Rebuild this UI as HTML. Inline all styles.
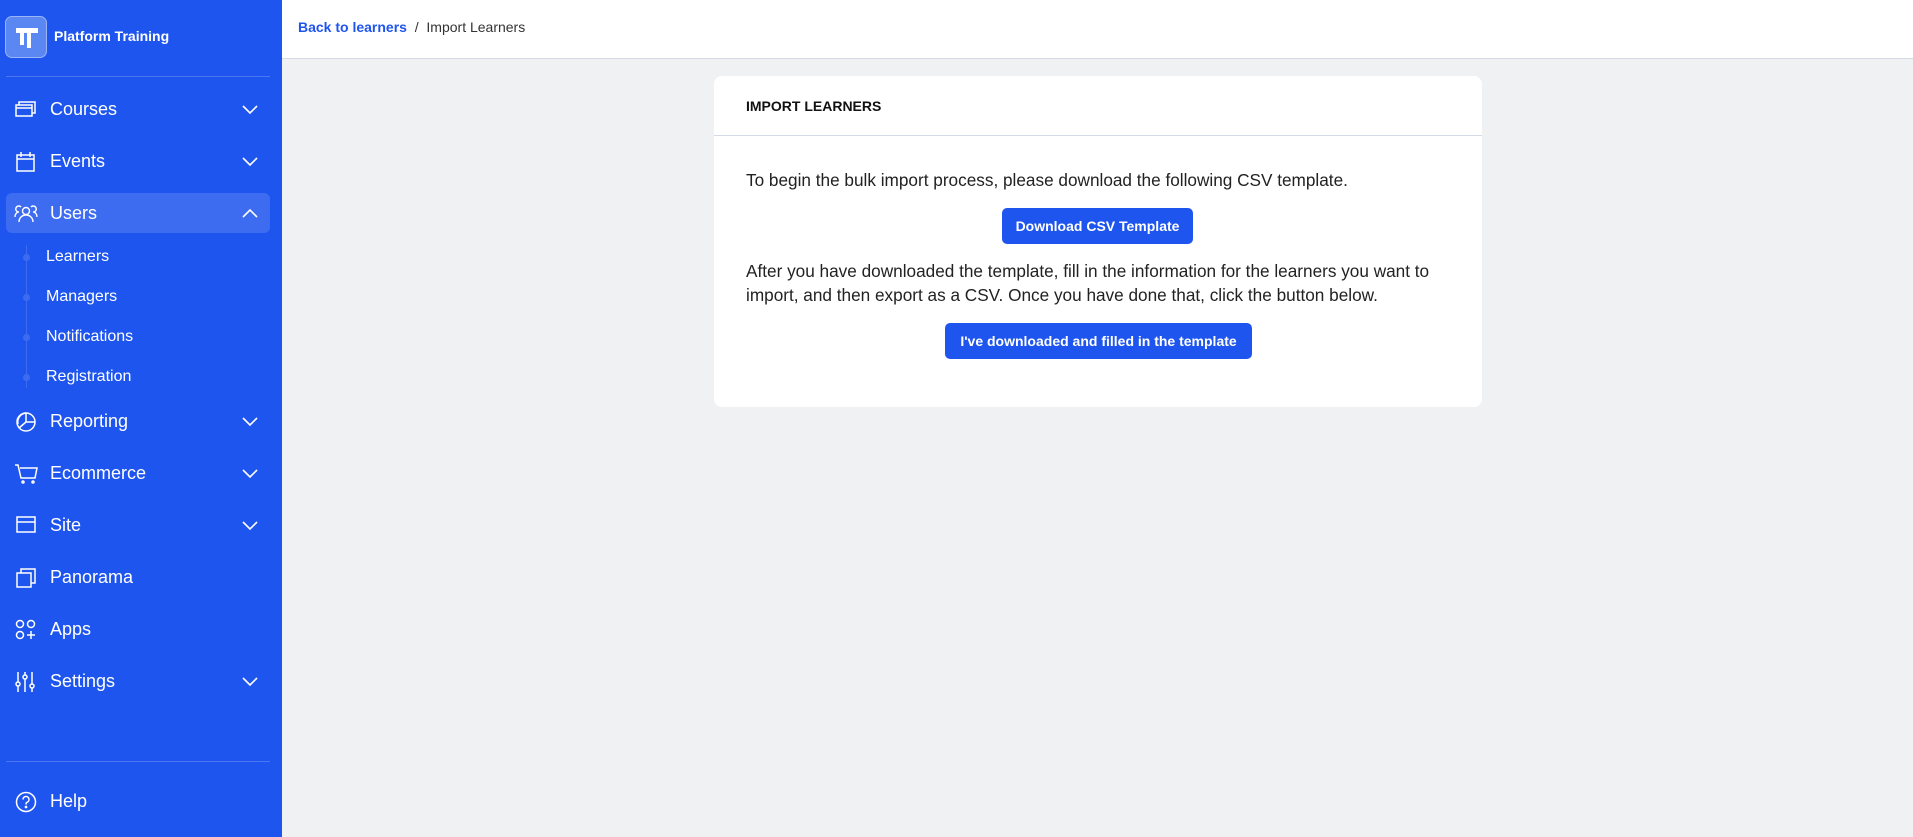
<!DOCTYPE html>
<html><head><style>
*{box-sizing:border-box;margin:0;padding:0}
body{width:1913px;height:837px;overflow:hidden;background:#f0f1f3;font-family:"Liberation Sans",sans-serif;position:relative}
.sb{position:absolute;left:0;top:0;width:282px;height:837px;background:#1f55ef;color:#fff}
.logo{position:absolute;left:5px;top:16px;width:42px;height:42px;border-radius:7px;background:#5b87f3;border:1px solid #9ab5f7}
.brand{position:absolute;left:54px;top:28px;font-size:14px;font-weight:bold}
.hr{position:absolute;left:6px;width:264px;height:1px;background:#4a76f2}
.it{position:absolute;left:0;width:282px;height:40px;font-size:18px}
.it svg.ic{position:absolute;left:15px;top:10px}
.it span{position:absolute;left:50px;top:10px}
.it svg.ch{position:absolute;left:241px;top:14px}
.act{left:6px!important;width:264px;background:#3d6cf1;border-radius:6px}
.sub{position:absolute;left:46px;font-size:16px}
.dot{position:absolute;left:23px;width:7px;height:7px;border-radius:50%;background:#3d6cf1}
.top{position:absolute;left:282px;top:0;right:0;height:59px;background:#fff;border-bottom:1px solid #d4dbe6;font-size:14px}
.card{position:absolute;left:714px;top:76px;width:768px;height:331px;background:#fff;border-radius:8px}
.btn{position:absolute;background:#1f55ef;color:#fff;font-weight:bold;font-size:14px;border-radius:5px;text-align:center;line-height:36px}
p{position:absolute;left:32px;font-size:17.2px;color:#222;line-height:24px;white-space:nowrap}
</style></head><body>
<div class="sb">
<div class="logo"><svg width="42" height="42" viewBox="0 0 42 42"><path d="M10 11h22v5h-7v15h-4V16h-3v12h-4V16h-4z" fill="#fff"/></svg></div>
<div class="brand">Platform Training</div>
<div class="hr" style="top:76px"></div>
<div class="it" style="top:89px"><svg class="ic" width="22" height="20" fill="none" stroke="#fff" stroke-width="1.5"><rect x="1" y="6" width="16" height="11"/><path d="M4 6V3h16v11h-3M1 9h16"/></svg><span>Courses</span><svg class="ch" width="18" height="12" fill="none" stroke="#fff" stroke-width="1.6"><path d="M2 3l7 7 7-7"/></svg></div>
<div class="it" style="top:141px"><svg class="ic" width="22" height="22" fill="none" stroke="#fff" stroke-width="1.5"><rect x="2" y="4" width="17" height="16"/><path d="M2 8h17M6 1v5M15 1v5"/></svg><span>Events</span><svg class="ch" width="18" height="12" fill="none" stroke="#fff" stroke-width="1.6"><path d="M2 3l7 7 7-7"/></svg></div>
<div class="it act" style="top:193px"><svg class="ic" width="24" height="20" fill="none" stroke="#fff" stroke-width="1.4" style="left:8px"><circle cx="12" cy="8" r="3.5"/><path d="M5 19c0-4 3-7 7-7s7 3 7 7M5 9a3 3 0 1 1 2-5M19 9a3 3 0 1 0-2-5M1 14c0-2 1-4 3-5M23 14c0-2-1-4-3-5"/></svg><span style="left:44px">Users</span><svg class="ch" width="18" height="12" fill="none" stroke="#fff" stroke-width="1.6" style="left:235px"><path d="M2 10l7-7 7 7"/></svg></div>
<div style="position:absolute;left:26px;top:245px;width:1px;height:143px;background:#3d6cf1"></div>
<div class="dot" style="top:254px"></div><div class="sub" style="top:248px">Learners</div>
<div class="dot" style="top:294px"></div><div class="sub" style="top:288px">Managers</div>
<div class="dot" style="top:334px"></div><div class="sub" style="top:328px">Notifications</div>
<div class="dot" style="top:374px"></div><div class="sub" style="top:368px">Registration</div>
<div class="it" style="top:401px"><svg class="ic" width="22" height="22" fill="none" stroke="#fff" stroke-width="1.5"><circle cx="11" cy="11" r="9"/><path d="M11 2v9l-7 6M11 11h9M11 2a9 9 0 0 0-8 11"/></svg><span>Reporting</span><svg class="ch" width="18" height="12" fill="none" stroke="#fff" stroke-width="1.6"><path d="M2 3l7 7 7-7"/></svg></div>
<div class="it" style="top:453px"><svg class="ic" width="24" height="22" fill="none" stroke="#fff" stroke-width="1.5"><path d="M0 2h3l3 13h14l2-10H5"/><circle cx="8" cy="19" r="1"/><circle cx="18" cy="19" r="1"/></svg><span>Ecommerce</span><svg class="ch" width="18" height="12" fill="none" stroke="#fff" stroke-width="1.6"><path d="M2 3l7 7 7-7"/></svg></div>
<div class="it" style="top:505px"><svg class="ic" width="22" height="20" fill="none" stroke="#fff" stroke-width="1.5"><rect x="2" y="2" width="18" height="15"/><path d="M2 7h18"/></svg><span>Site</span><svg class="ch" width="18" height="12" fill="none" stroke="#fff" stroke-width="1.6"><path d="M2 3l7 7 7-7"/></svg></div>
<div class="it" style="top:557px"><svg class="ic" width="22" height="22" fill="none" stroke="#fff" stroke-width="1.5"><rect x="2" y="6" width="14" height="14"/><path d="M6 6V2h14v14h-4"/></svg><span>Panorama</span></div>
<div class="it" style="top:609px"><svg class="ic" width="22" height="22" fill="none" stroke="#fff" stroke-width="1.5"><circle cx="5" cy="5" r="3.5"/><circle cx="16" cy="5" r="3.5"/><circle cx="5" cy="16" r="3.5"/><path d="M16 12v8M12 16h8"/></svg><span>Apps</span></div>
<div class="it" style="top:661px"><svg class="ic" width="22" height="22" fill="none" stroke="#fff" stroke-width="1.5"><path d="M3 1v10M3 15v6M10 1v3M10 8v13M17 1v12M17 17v4"/><circle cx="3" cy="13" r="2"/><circle cx="10" cy="6" r="2"/><circle cx="17" cy="15" r="2"/></svg><span>Settings</span><svg class="ch" width="18" height="12" fill="none" stroke="#fff" stroke-width="1.6"><path d="M2 3l7 7 7-7"/></svg></div>
<div class="hr" style="top:761px"></div>
<div class="it" style="top:781px"><svg class="ic" width="22" height="22" fill="none" stroke="#fff" stroke-width="1.5"><circle cx="11" cy="11" r="9.5"/><path d="M8 8.5a3 3 0 1 1 4 2.8c-1 .4-1 1-1 2.2"/><circle cx="11" cy="16" r=".6" fill="#fff"/></svg><span>Help</span></div>
</div>
<div class="top"><div style="position:absolute;left:16px;top:19px"><b style="color:#1f55ef">Back to learners</b><span style="color:#333">&nbsp;&nbsp;/&nbsp;&nbsp;Import Learners</span></div></div>
<div class="card">
<div style="position:absolute;left:32px;top:22px;font-size:14px;font-weight:bold;color:#111">IMPORT LEARNERS</div>
<div style="position:absolute;left:0;right:0;top:59px;height:1px;background:#d4dbe6"></div>
<p style="top:92px">To begin the bulk import process, please download the following CSV template.</p>
<div class="btn" style="left:288px;top:132px;width:191px">Download CSV Template</div>
<p style="top:183px">After you have downloaded the template, fill in the information for the learners you want to<br>import, and then export as a CSV. Once you have done that, click the button below.</p>
<div class="btn" style="left:231px;top:247px;width:307px">I've downloaded and filled in the template</div>
</div>
</body></html>
